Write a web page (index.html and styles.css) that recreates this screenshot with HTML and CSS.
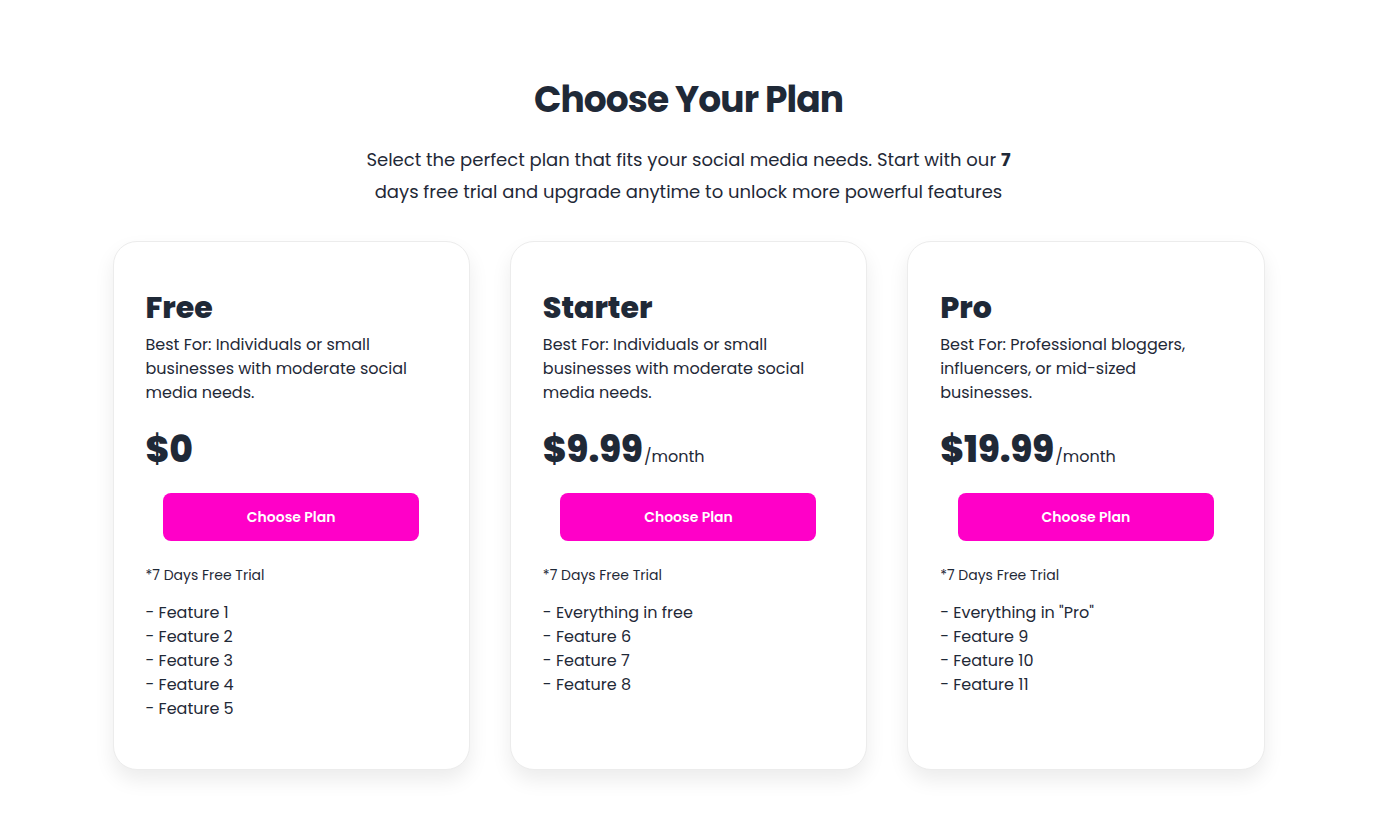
FILE: index.html
```html
<!DOCTYPE html>
<html lang="en">
<head>
    <meta charset="UTF-8">
    <meta name="viewport" content="width=device-width, initial-scale=1.0">
    <title>Choose Your Plan</title>
    <link rel="stylesheet" href="styles.css">
</head>
<body>
    <section class="pricing">
        <h1>Choose Your Plan</h1>
        <p class="subtitle">Select the perfect plan that fits your social media needs. Start with our <b>7</b> days free trial and upgrade anytime to unlock more powerful features</p>

        <div class="plans">
            <div class="plan">
                <h2>Free</h2>
                <p class="best-for">Best For: Individuals or small businesses with moderate social media needs.</p>
                <p class="price">$0</p>
                <button class="choose-btn">Choose Plan</button>
                <p class="trial">*7 Days Free Trial</p>
                <ul class="features">
                    <li>- Feature 1</li>
                    <li>- Feature 2</li>
                    <li>- Feature 3</li>
                    <li>- Feature 4</li>
                    <li>- Feature 5</li>
                </ul>
            </div>
            <div class="plan">
                <h2>Starter</h2>
                <p class="best-for">Best For: Individuals or small businesses with moderate social media needs.</p>
                <p class="price">$9.99<span>/month</span></p>
                <button class="choose-btn">Choose Plan</button>
                <p class="trial">*7 Days Free Trial</p>
                <ul class="features">
                    <li>- Everything in free</li>
                    <li>- Feature 6</li>
                    <li>- Feature 7</li>
                    <li>- Feature 8</li>
                </ul>
            </div>
            <div class="plan">
                <h2>Pro</h2>
                <p class="best-for">Best For: Professional bloggers, influencers, or mid-sized businesses.</p>
                <p class="price">$19.99<span>/month</span></p>
                <button class="choose-btn">Choose Plan</button>
                <p class="trial">*7 Days Free Trial</p>
                <ul class="features">
                    <li>- Everything in "Pro"</li>
                    <li>- Feature 9</li>
                    <li>- Feature 10</li>
                    <li>- Feature 11</li>
                </ul>
            </div>
        </div>
    </section>
</body>
</html>
```

FILE: styles.css
```css
body {
    font-family: Poppins, Inter, "Noto Sans", sans-serif;
    margin: 0;
    padding: 0 15px 0 0; /* room for the scrollbar */
    background-color: #fff;
    color: #1f2937;
}
.pricing {
    max-width: 1152px;
    margin: 0 auto;
    padding: 76px 0 90px;
    text-align: center;
}
h1 {
    font-size: 36px;
    font-weight: 700;
    line-height: 48px;
    margin: 0;
    letter-spacing: -0.9px;
}
.subtitle {
    max-width: 672px;
    margin: 20px auto 0;
    font-size: 18px;
    line-height: 31.5px;
}
.subtitle b {
    font-weight: 700;
}
.plans {
    display: grid;
    grid-template-columns: repeat(3, 1fr);
    gap: 40px;
    margin-top: 34px;
    text-align: left;
}
.plan {
    background: #fff;
    border: 1px solid #ececec;
    border-radius: 24px;
    box-shadow: 0 10px 20px rgba(0, 0, 0, 0.08);
    padding: 46px 32px 48px;
}
.plan h2 {
    font-size: 30px;
    font-weight: 800;
    line-height: 40px;
    margin: 0 0 5px;
}
.best-for {
    font-size: 16px;
    line-height: 24px;
    margin: 0;
}
.price {
    font-size: 36px;
    font-weight: 800;
    line-height: 48px;
    height: 48px;
    margin: 21px 0 0;
}
.price span {
    font-size: 16px;
    font-weight: 400;
    line-height: 1;
    margin-left: 1px;
}
.choose-btn {
    display: block;
    width: 256px;
    height: 48px;
    margin: 19px auto 0;
    border: none;
    border-radius: 8px;
    background-color: #ff00c8;
    color: #fff;
    font-family: inherit;
    font-size: 14px;
    font-weight: 600;
    cursor: pointer;
}
.trial {
    font-size: 14px;
    line-height: 20px;
    margin: 24px 0 0;
}
.features {
    list-style: none;
    padding: 0;
    margin: 16px 0 0;
    font-size: 16px;
    line-height: 24px;
}
```
